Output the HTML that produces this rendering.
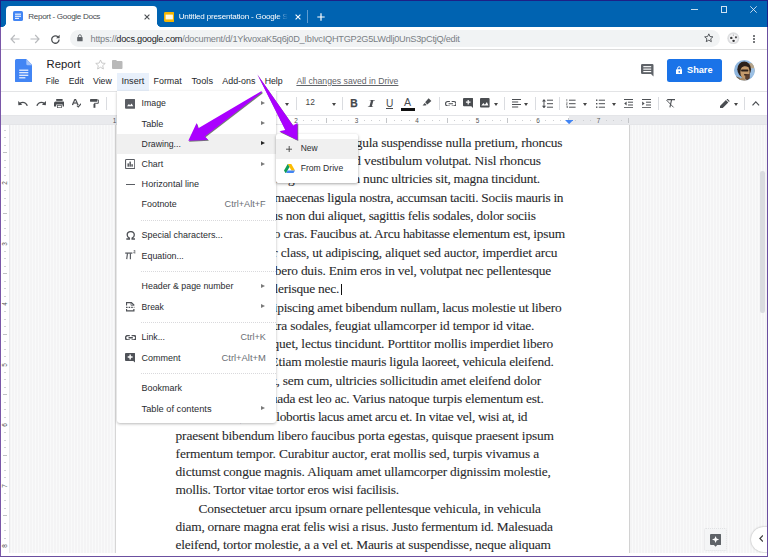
<!DOCTYPE html>
<html><head><meta charset="utf-8"><title>Report - Google Docs</title>
<style>
*{box-sizing:border-box;margin:0;padding:0}
html,body{width:768px;height:557px;overflow:hidden;background:#fff}
body{position:relative;font-family:"Liberation Sans",sans-serif;color:#333;-webkit-font-smoothing:antialiased}
.abs{position:absolute}
#frame{position:absolute;left:0;top:0;width:768px;height:557px;overflow:hidden;background:#fff}
/* chrome title bar */
#titlebar{position:absolute;left:0;top:0;width:768px;height:27px;background:#0063b1}
#tab1{position:absolute;left:6px;top:6px;width:151px;height:21px;background:#fff;border-radius:4px 4px 0 0}
#tab1:before,#tab1:after{content:"";position:absolute;bottom:0;width:4px;height:4px;background:radial-gradient(circle at 0 0,rgba(255,255,255,0) 3.6px,#fff 4.2px)}
#tab1:before{left:-4px}
#tab1:after{right:-4px;background:radial-gradient(circle at 100% 0,rgba(255,255,255,0) 3.6px,#fff 4.2px)}
.tabtxt{position:absolute;top:10px;font-size:9.4px;line-height:13px;white-space:nowrap}
/* address row */
#addr{position:absolute;left:0;top:27px;width:768px;height:23px;background:#fff;border-bottom:1px solid #dcdcdc}
#pill{position:absolute;left:70px;top:3px;width:650px;height:17px;border-radius:9px;background:#f1f3f4}
#url{position:absolute;left:90px;top:5.5px;font-size:10.4px;line-height:12px;color:#70757a;white-space:nowrap}
#url b{font-weight:normal;color:#202124}
/* docs header */
#hdr{position:absolute;left:0;top:50px;width:768px;height:41px;background:#fff}
#title{position:absolute;left:45.5px;top:58px;font-size:13.6px;line-height:16px;color:#202124;white-space:nowrap}
.menu{position:absolute;top:75px;font-size:10.3px;line-height:12px;color:#202124;white-space:nowrap}
#toolbar{position:absolute;left:0;top:91px;width:768px;height:24px;background:#fff;border-top:1px solid #e3e4e6}
.sep{position:absolute;top:97px;width:1px;height:13px;background:#dadce0}
.ico{position:absolute;fill:#444}
.dd{position:absolute;top:102.5px;width:0;height:0;border-left:2.6px solid transparent;border-right:2.6px solid transparent;border-top:3px solid #444}
/* ruler */
#ruler{position:absolute;left:0;top:115px;width:768px;height:10px;background:#e9eaed;border-top:1px solid #e4e5e8;border-bottom:1px solid #e4e5e8}
#rulerw{position:absolute;left:175px;top:0;width:393.5px;height:8px;background:#fff}
.rn{position:absolute;top:-0.5px;font-size:6.4px;line-height:9px;color:#555;width:10px;margin-left:-5px;text-align:center}
/* canvas */
#canvas{position:absolute;left:0;top:125px;width:768px;height:432px;background:repeating-linear-gradient(90deg,#f4f4f5 0,#f4f4f5 1.6px,#fbfcfc 2.3px,#f4f4f5 3px)}
#vruler{position:absolute;left:1px;top:125px;width:9px;height:432px;background:#fff;border-right:1px solid #e6e7ea}
#page{position:absolute;left:114.5px;top:125px;width:515.5px;height:432px;background:#fff;border-left:1px solid #d6d6d6;border-right:1px solid #d2d2d2}
.ln{position:absolute;left:175.8px;font-family:"Liberation Serif",serif;font-size:13px;line-height:16px;color:#222;white-space:nowrap}
/* dropdown menu */
#ddm{position:absolute;left:116.5px;top:91px;width:159.7px;height:332px;background:#fff;box-shadow:0 1px 3px rgba(0,0,0,.28);border-radius:0 0 3px 3px}
.mi{position:absolute;left:25.5px;font-size:9.9px;line-height:12px;color:#202124;white-space:nowrap}
.sc{position:absolute;right:10px;font-size:9.9px;line-height:12px;color:#444;white-space:nowrap}
.ar{position:absolute;left:144.2px;width:0;height:0;border-top:2.4px solid transparent;border-bottom:2.4px solid transparent;border-left:4px solid #777}
.hr{position:absolute;left:24.3px;right:0;height:0;border-top:1px dotted #d9d9dc}
#sub{position:absolute;left:275.5px;top:134px;width:82.5px;height:49px;background:#fff;box-shadow:0 1px 3px rgba(0,0,0,.35);border-radius:2px}
/* borders */
#bl{position:absolute;left:0;top:0;width:1px;height:557px;background:#7a57a8}
#br{position:absolute;left:767px;top:0;width:1px;height:557px;background:#6b4fa0}
#bb{position:absolute;left:0;top:556px;width:768px;height:1px;background:#6b4fa0}
#bt{position:absolute;left:0;top:0;width:768px;height:1px;background:#1c2087}
#bl2{position:absolute;left:0;top:0;width:1px;height:27px;background:#1c2087}
#br2{position:absolute;left:767px;top:0;width:1px;height:27px;background:#1c2087}
</style></head><body>
<div id="frame">
<div id="titlebar">
  <div id="tab1"></div>
  <!-- docs favicon -->
  <svg class="abs" style="left:13px;top:11px" width="10" height="10" viewBox="0 0 10 10"><rect x="0" y="0" width="10" height="10" rx="1.6" fill="#4285f4"/><rect x="2" y="2.6" width="6" height="1.2" fill="#e8f0fe"/><rect x="2" y="4.7" width="6" height="1.2" fill="#e8f0fe"/><rect x="2" y="6.8" width="4" height="1.2" fill="#e8f0fe"/></svg>
  <div class="abs" style="left:28.30px;top:13px;font-size:8.10px;line-height:1em;white-space:pre;letter-spacing:-0.325px;color:#484b50;">Report - Google Docs</div>
  <svg class="abs" style="left:144px;top:13.5px" width="6" height="6" viewBox="0 0 6 6"><path d="M0.6 0.6L5.4 5.4M5.4 0.6L0.6 5.4" stroke="#4a4d51" stroke-width="1.1" fill="none"/></svg>
  <!-- slides favicon -->
  <svg class="abs" style="left:163.5px;top:11.5px" width="10.5" height="10" viewBox="0 0 10.5 10"><rect x="0" y="0" width="10.5" height="10" rx="1.4" fill="#f4b400"/><rect x="1.6" y="2.6" width="7.3" height="4.8" fill="#fff8e1"/></svg>
  <div class="abs" style="left:178.70px;top:13px;font-size:8.10px;line-height:1em;white-space:pre;letter-spacing:-0.190px;color:#fff;-webkit-mask-image:linear-gradient(90deg,#000 90%,transparent 100%);mask-image:linear-gradient(90deg,#000 90%,transparent 100%);">Untitled presentation - Google S</div>
  <svg class="abs" style="left:294.5px;top:13.5px" width="6" height="6" viewBox="0 0 6 6"><path d="M0.6 0.6L5.4 5.4M5.4 0.6L0.6 5.4" stroke="#fff" stroke-width="1.1" fill="none"/></svg>
  <div class="abs" style="left:307px;top:10px;width:1px;height:13px;background:#5f9bd0"></div>
  <svg class="abs" style="left:317px;top:12.5px" width="8" height="8" viewBox="0 0 8 8"><path d="M4 0.3V7.7M0.3 4H7.7" stroke="#fff" stroke-width="1.2" fill="none"/></svg>
  <!-- window controls -->
  <div class="abs" style="left:691px;top:9px;width:7.2px;height:1px;background:#c5dcef"></div>
  <div class="abs" style="left:720.5px;top:6.2px;width:6.8px;height:6.8px;border:1px solid #cfe2f2"></div>
  <svg class="abs" style="left:749.5px;top:6px" width="7" height="7" viewBox="0 0 7 7"><path d="M0.3 0.3L6.7 6.7M6.7 0.3L0.3 6.7" stroke="#e4eff8" stroke-width="0.85" fill="none"/></svg>
</div>

<div id="addr">
  <svg class="abs" style="left:10px;top:7px" width="10" height="10" viewBox="0 0 10 10"><path d="M9.5 5H1.2M4.8 1L1 5L4.8 9" stroke="#b8babd" stroke-width="1.15" fill="none"/></svg>
  <svg class="abs" style="left:30px;top:7px" width="10" height="10" viewBox="0 0 10 10"><path d="M0.5 5H8.8M5.2 1L9 5L5.2 9" stroke="#b8babd" stroke-width="1.15" fill="none"/></svg>
  <svg class="abs" style="left:49.5px;top:6.5px" width="11" height="11" viewBox="0 0 11 11"><path d="M9.1 5.6A3.7 3.7 0 1 1 8 2.9" stroke="#4b4e52" stroke-width="1.25" fill="none"/><path d="M9.6 0.8V4.3H6.1Z" fill="#4b4e52"/></svg>
  <div id="pill"></div>
  <svg class="abs" style="left:77.2px;top:7px" width="5.8" height="7.6" viewBox="0 0 7 9"><rect x="0.2" y="3.6" width="6.6" height="5.2" rx="0.7" fill="#5f6368"/><path d="M1.7 3.8V2.6A1.8 1.8 0 0 1 5.3 2.6V3.8" stroke="#5f6368" stroke-width="1.05" fill="none"/></svg>
  <div class="abs" style="left:90.60px;top:8px;font-size:9.20px;line-height:1em;white-space:pre;letter-spacing:-0.238px;color:#7a7f85;">https://<span style="color:#202124">docs.google.com</span>/document/d/1YkvoxaK5q6j0D_IbIvcIQHTGP2G5LWdlj0UnS3pCtjQ/edit</div>
  <svg class="abs" style="left:703.6px;top:6.2px" width="9.6" height="9.6" viewBox="0 0 10 10"><path d="M5 0.9L6.25 3.7L9.3 4L7 6.05L7.65 9.05L5 7.5L2.35 9.05L3 6.05L0.7 4L3.75 3.7Z" stroke="#4b4e52" stroke-width="0.95" fill="none" stroke-linejoin="round"/></svg>
  <svg class="abs" style="left:727.2px;top:5px" width="12.6" height="12.4" viewBox="0 0 13 13"><circle cx="6.5" cy="6.5" r="6.3" fill="#dddee0"/><circle cx="6.5" cy="6.5" r="4.5" fill="#f4f4f5"/><circle cx="4.4" cy="6.2" r="1.25" fill="#3c3c3e"/><circle cx="9.3" cy="5.6" r="1.15" fill="#4a4a4c"/><circle cx="6.8" cy="9.3" r="1.3" fill="#333335"/><circle cx="6.6" cy="3.2" r="0.7" fill="#9a9a9c"/></svg>
  <div class="abs" style="left:753.1px;top:7.9px;width:1.7px;height:1.7px;background:#4b4e52;border-radius:1px;box-shadow:0 3px 0 #4b4e52,0 6px 0 #4b4e52"></div>
</div>

<div id="hdr"></div>
<!-- docs logo -->
<svg class="abs" style="left:14.5px;top:58.5px" width="17.5" height="23.5" viewBox="0 0 17.5 23.5"><path d="M1.6 0H11.3L17.5 6.2V21.9A1.6 1.6 0 0 1 15.9 23.5H1.6A1.6 1.6 0 0 1 0 21.9V1.6A1.6 1.6 0 0 1 1.6 0Z" fill="#4285f4"/><path d="M11.3 0L17.5 6.2H12.6A1.3 1.3 0 0 1 11.3 4.9Z" fill="#a1c2fa"/><rect x="4.2" y="10.6" width="9.1" height="1.2" fill="#f1f6fe"/><rect x="4.2" y="13.1" width="9.1" height="1.2" fill="#f1f6fe"/><rect x="4.2" y="15.7" width="9.1" height="1.2" fill="#f1f6fe"/><rect x="4.2" y="18.2" width="6.2" height="1.2" fill="#f1f6fe"/></svg>
<div class="abs" style="left:46.50px;top:59px;font-size:11.29px;line-height:1em;white-space:pre;color:#202124;">Report</div>
<svg class="abs" style="left:94.5px;top:59px" width="11" height="11" viewBox="0 0 10 10"><path d="M5 0.9L6.25 3.7L9.3 4L7 6.05L7.65 9.05L5 7.5L2.35 9.05L3 6.05L0.7 4L3.75 3.7Z" stroke="#c4c4c4" stroke-width="0.8" fill="none" stroke-linejoin="round"/></svg>
<svg class="abs" style="left:112px;top:60px" width="10.5" height="9" viewBox="0 0 10.5 9"><path d="M0.9 0H4L5.1 1.1H9.6A0.9 0.9 0 0 1 10.5 2V8.1A0.9 0.9 0 0 1 9.6 9H0.9A0.9 0.9 0 0 1 0 8.1V0.9A0.9 0.9 0 0 1 0.9 0Z" fill="#b9b9b9"/></svg>
<div class="abs" style="left:117px;top:72.5px;width:32px;height:18.5px;background:#e8f0fb"></div>
<div class="abs" style="left:45.75px;top:77px;font-size:8.41px;line-height:1em;white-space:pre;color:#24262a;">File</div>
<div class="abs" style="left:68.75px;top:77px;font-size:8.70px;line-height:1em;white-space:pre;color:#24262a;">Edit</div>
<div class="abs" style="left:93.00px;top:77px;font-size:8.72px;line-height:1em;white-space:pre;color:#24262a;">View</div>
<div class="abs" style="left:121.50px;top:77px;font-size:9.10px;line-height:1em;white-space:pre;color:#24262a;">Insert</div>
<div class="abs" style="left:153.50px;top:77px;font-size:8.92px;line-height:1em;white-space:pre;color:#24262a;">Format</div>
<div class="abs" style="left:191.50px;top:77px;font-size:9.21px;line-height:1em;white-space:pre;color:#24262a;">Tools</div>
<div class="abs" style="left:222.30px;top:77px;font-size:8.89px;line-height:1em;white-space:pre;color:#24262a;">Add-ons</div>
<div class="abs" style="left:264.70px;top:77px;font-size:8.75px;line-height:1em;white-space:pre;color:#24262a;">Help</div>
<div class="abs" style="left:296.40px;top:77px;font-size:8.66px;line-height:1em;white-space:pre;color:#5f6368;text-decoration:underline;text-decoration-thickness:0.6px;text-underline-offset:1px;">All changes saved in Drive</div>
<!-- comment icon -->
<svg class="abs" style="left:641px;top:64px" width="12.5" height="12.5" viewBox="0 0 12.5 12.5"><path d="M1.2 0H11.3A1.2 1.2 0 0 1 12.5 1.2V12.5L10 10H1.2A1.2 1.2 0 0 1 0 8.8V1.2A1.2 1.2 0 0 1 1.2 0Z" fill="#5f6368"/><rect x="2.3" y="2.1" width="7.9" height="1.15" fill="#fff"/><rect x="2.3" y="4.55" width="7.9" height="1.15" fill="#fff"/><rect x="2.3" y="7" width="7.9" height="1.15" fill="#fff"/></svg>
<!-- share -->
<div class="abs" style="left:667px;top:59px;width:55px;height:22.5px;background:#1a73e8;border-radius:2.5px"></div>
<svg class="abs" style="left:675.5px;top:65.5px" width="6.5" height="8.5" viewBox="0 0 6.5 8.5"><rect x="0" y="3.3" width="6.5" height="5.2" rx="0.7" fill="#fff"/><path d="M1.6 3.6V2.4A1.65 1.65 0 0 1 4.9 2.4V3.6" stroke="#fff" stroke-width="1" fill="none"/><circle cx="3.25" cy="5.9" r="0.8" fill="#1a73e8"/></svg>
<div class="abs" style="left:687px;top:64px;font-size:9.2px;line-height:12px;font-weight:bold;color:#fff;white-space:nowrap">Share</div>
<!-- avatar -->
<svg class="abs" style="left:734.4px;top:60px" width="20.8" height="20.8" viewBox="0 0 20 20"><defs><clipPath id="av"><circle cx="10" cy="10" r="10"/></clipPath></defs><g clip-path="url(#av)"><rect width="20" height="20" fill="#8fb6de"/><rect x="14" y="3" width="6" height="9" fill="#b7a58a"/><rect x="15.5" y="8" width="4.5" height="8" fill="#9cc0e4"/><ellipse cx="9.8" cy="9" rx="6.6" ry="7.6" fill="#2b211c"/><ellipse cx="10.6" cy="11.6" rx="4.5" ry="6.6" fill="#c39a6c"/><path d="M6 6.5C7 3.5 13.5 3.2 15 7L13.5 6.6C11.5 5.6 8.5 5.8 6.8 7.6Z" fill="#2b211c"/><rect x="6.8" y="9.2" width="7" height="1.9" rx="0.8" fill="#2c201b"/><path d="M10.8 13.4H15.2V17.5L12.5 19.5L10.8 18Z" fill="#5b3f2e"/><rect x="9.6" y="13.6" width="2.4" height="1.2" fill="#3a2921"/><path d="M0 15L5.5 17L7 20H0Z" fill="#7a6a58"/><path d="M5 18.5L8 16.5L13 20H5Z" fill="#a98a66"/></g></svg>

<div id="toolbar"></div>
<!-- undo -->
<svg class="ico" style="left:17.8px;top:100.8px" width="10.2" height="5.4" viewBox="0 0 11 6"><path d="M0 0L0.2 4.6L4.6 4.2L3 2.9C5.4 1.5 8.3 2.3 9.5 5.6L10.9 5.1C9.4 0.9 5 -0.2 1.8 1.8Z" fill="#4a4d51"/></svg>
<!-- redo -->
<svg class="ico" style="left:36px;top:100.8px" width="10.2" height="5.4" viewBox="0 0 11 6"><path d="M11 0L10.8 4.6L6.4 4.2L8 2.9C5.6 1.5 2.7 2.3 1.5 5.6L0.1 5.1C1.6 0.9 6 -0.2 9.2 1.8Z" fill="#4a4d51"/></svg>
<!-- print -->
<svg class="ico" style="left:53.5px;top:98.5px" width="10.8" height="9.2" viewBox="0 0 10.8 9.2"><rect x="2.2" y="0" width="6.4" height="1.9" fill="#4a4d51"/><path d="M1.6 2.6H9.2A1.6 1.6 0 0 1 10.8 4.2V7.4H8.6V5.4H2.2V7.4H0V4.2A1.6 1.6 0 0 1 1.6 2.6Z" fill="#4a4d51"/><rect x="3" y="6.1" width="4.8" height="3.1" fill="#4a4d51"/><rect x="3.7" y="6.8" width="3.4" height="1.6" fill="#fff"/></svg>
<!-- spellcheck -->
<svg class="ico" style="left:71.5px;top:99.3px" width="9.6" height="8.6" viewBox="0 0 9.6 8.6"><path d="M2.5 0H3.9L6.6 6H5.3L4.7 4.6H1.7L1.1 6H-0.2ZM2 3.6H4.4L3.2 0.9Z" fill="#4a4d51" stroke="#4a4d51" stroke-width="0.2"/><path d="M4.9 6.7L6.3 8L9.2 4.6" stroke="#4a4d51" stroke-width="1.15" fill="none"/></svg>
<!-- paint format -->
<svg class="ico" style="left:89.8px;top:98.8px" width="8.8" height="8.8" viewBox="0 0 8.8 8.8"><rect x="0" y="0" width="7.2" height="2.7" rx="0.4" fill="#4a4d51"/><path d="M7.2 0.9H8.3V4.3H4.4V5.2" stroke="#4a4d51" stroke-width="0.95" fill="none"/><rect x="3.5" y="5" width="1.9" height="3.8" fill="#4a4d51"/></svg>
<div class="sep" style="left:105.5px"></div>
<!-- zoom / style / font dropdowns mostly hidden by menu -->
<div class="dd" style="left:284.8px"></div>
<div class="sep" style="left:295.5px"></div>
<div class="abs" style="left:305.5px;top:97px;font-size:8.4px;line-height:11px;color:#444">12</div>
<div class="dd" style="left:331.8px"></div>
<div class="sep" style="left:342.3px"></div>
<div class="abs" style="left:350.3px;top:99px;font-size:10.3px;line-height:1em;font-weight:bold;color:#44474b;-webkit-text-stroke:0.25px #44474b">B</div>
<div class="abs" style="left:367.6px;top:98px;font-size:10.8px;line-height:1em;font-style:italic;font-weight:bold;color:#4a4d51;font-family:'Liberation Serif',serif;transform:scaleX(1.55);transform-origin:0 0">I</div>
<div class="abs" style="left:385.9px;top:99px;font-size:10.2px;line-height:1em;color:#4a4d51">U</div>
<div class="abs" style="left:385.8px;top:108px;width:7.6px;height:1px;background:#4a4d51"></div>
<div class="abs" style="left:403.9px;top:97px;font-size:10.6px;line-height:1em;color:#4a4d51">A</div>
<div class="abs" style="left:400.5px;top:108px;width:14px;height:2.6px;background:#111"></div>
<!-- highlighter -->
<svg class="ico" style="left:422px;top:98.3px" width="9.6" height="8" viewBox="0 0 9.6 8"><path d="M6.6 0.2L9.4 3L5.3 6.4L3.2 4.3Z" fill="#4a4d51"/><path d="M2.7 4.9L4.7 6.9L3.4 7.6H0.6Z" fill="#4a4d51"/></svg>
<div class="sep" style="left:438.8px"></div>
<!-- link -->
<svg class="ico" style="left:444.5px;top:100.6px" width="11.6" height="5.6" viewBox="0 0 11.6 5.6"><path d="M4.9 0.55H2.8A2.25 2.25 0 0 0 2.8 5.05H4.9M6.7 0.55H8.8A2.25 2.25 0 0 1 8.8 5.05H6.7M3.6 2.8H8" stroke="#4a4d51" stroke-width="1.1" fill="none"/></svg>
<!-- add comment -->
<svg class="ico" style="left:463px;top:98px" width="10.4" height="10.4" viewBox="0 0 10.4 10.4"><path d="M1 0H9.4A1 1 0 0 1 10.4 1V10.4L8.3 8.3H1A1 1 0 0 1 0 7.3V1A1 1 0 0 1 1 0Z" fill="#4a4d51"/><path d="M5.2 1.9V6.5M2.9 4.2H7.5" stroke="#fff" stroke-width="1.2" fill="none"/></svg>
<!-- image -->
<svg class="ico" style="left:480.3px;top:98.4px" width="9.6" height="9.6" viewBox="0 0 9.6 9.6"><rect x="0" y="0" width="9.6" height="9.6" rx="1" fill="#4a4d51"/><path d="M1.3 7.6L3.4 4.9L4.9 6.7L6.9 4.1L8.4 7.6Z" fill="#fff"/></svg>
<div class="dd" style="left:493.6px"></div>
<div class="sep" style="left:504.3px"></div>
<!-- align -->
<svg class="ico" style="left:511.8px;top:99.3px" width="9.4" height="8.6" viewBox="0 0 9.4 8.6"><path d="M0 0.5H9.4M0 3H6.2M0 5.5H9.4M0 8H6.2" stroke="#4a4d51" stroke-width="1" fill="none"/></svg>
<div class="dd" style="left:523.8px"></div>
<div class="sep" style="left:534.5px"></div>
<!-- line spacing -->
<svg class="ico" style="left:541.5px;top:98.8px" width="11.4" height="9.4" viewBox="0 0 11.4 9.4"><path d="M5 1.2H11.4M5 4.7H11.4M5 8.2H11.4" stroke="#4a4d51" stroke-width="1" fill="none"/><path d="M2 1.2V8.2" stroke="#4a4d51" stroke-width="0.95" fill="none"/><path d="M0 2.6L2 0L4 2.6ZM0 6.8L2 9.4L4 6.8Z" fill="#4a4d51"/></svg>
<div class="sep" style="left:559px"></div>
<!-- numbered list -->
<svg class="ico" style="left:566.4px;top:98.8px" width="9.6" height="9.4" viewBox="0 0 9.6 9.4"><path d="M3 1.2H9.6M3 4.7H9.6M3 8.2H9.6" stroke="#4a4d51" stroke-width="1" fill="none"/><path d="M0.8 0V2.4M0.2 3.8H1.4L0.2 5.6H1.4M0.2 7H1.4V9.4H0.2M0.6 8.2H1.4" stroke="#4a4d51" stroke-width="0.6" fill="none"/></svg>
<div class="dd" style="left:582.6px"></div>
<!-- bulleted list -->
<svg class="ico" style="left:596px;top:98.8px" width="9.4" height="9.4" viewBox="0 0 9.4 9.4"><path d="M2.8 1.2H9.4M2.8 4.7H9.4M2.8 8.2H9.4" stroke="#4a4d51" stroke-width="1" fill="none"/><rect x="0" y="0.5" width="1.4" height="1.4" fill="#4a4d51"/><rect x="0" y="4" width="1.4" height="1.4" fill="#4a4d51"/><rect x="0" y="7.5" width="1.4" height="1.4" fill="#4a4d51"/></svg>
<div class="dd" style="left:612px"></div>
<!-- outdent -->
<svg class="ico" style="left:623.8px;top:98.8px" width="9.4" height="9.2" viewBox="0 0 9.4 9.2"><path d="M0 0.5H9.4M4 3.2H9.4M4 6H9.4M0 8.7H9.4" stroke="#4a4d51" stroke-width="1" fill="none"/><path d="M2.6 2.6V6.6L0.2 4.6Z" fill="#4a4d51"/></svg>
<!-- indent -->
<svg class="ico" style="left:641.8px;top:98.8px" width="9.4" height="9.2" viewBox="0 0 9.4 9.2"><path d="M0 0.5H9.4M4 3.2H9.4M4 6H9.4M0 8.7H9.4" stroke="#4a4d51" stroke-width="1" fill="none"/><path d="M0.2 2.6V6.6L2.6 4.6Z" fill="#4a4d51"/></svg>
<div class="sep" style="left:657.8px"></div>
<!-- clear formatting -->
<svg class="ico" style="left:665.5px;top:99px" width="9.2" height="8.8" viewBox="0 0 9.2 8.8"><path d="M1.2 0.6H9.2M5.6 0.6L3.9 8.4" stroke="#4a4d51" stroke-width="1.1" fill="none"/><path d="M0.3 0.9L7.6 8.4" stroke="#4a4d51" stroke-width="0.9" fill="none"/></svg>
<!-- pencil -->
<svg class="ico" style="left:720px;top:98.5px" width="9.8" height="9.4" viewBox="0 0 9.8 9.4"><path d="M0 9.4V7L5.9 1.1L8.3 3.5L2.4 9.4ZM6.6 0.5L7 0.1A0.5 0.5 0 0 1 7.7 0.1L9.4 1.8A0.5 0.5 0 0 1 9.4 2.5L9 2.9Z" fill="#4a4d51"/></svg>
<div class="dd" style="left:733.6px"></div>
<div class="sep" style="left:744.4px"></div>
<!-- chevron up -->
<svg class="ico" style="left:752.2px;top:100.8px" width="7.6" height="4.8" viewBox="0 0 7.6 4.8"><path d="M0.5 4.3L3.8 0.9L7.1 4.3" stroke="#4a4d51" stroke-width="1.2" fill="none"/></svg>

<div id="ruler"><div id="rulerw"></div>
<div class="rn" style="left:114.5px">1</div>
<div class="abs" style="left:121.6px;top:3.5px;width:1px;height:1.5px;background:#cdcfd2"></div>
<div class="abs" style="left:129.1px;top:3.5px;width:1px;height:1.5px;background:#cdcfd2"></div>
<div class="abs" style="left:136.7px;top:3.5px;width:1px;height:1.5px;background:#cdcfd2"></div>
<div class="abs" style="left:144.2px;top:2px;width:1px;height:4.5px;background:#c3c5c8"></div>
<div class="abs" style="left:151.8px;top:3.5px;width:1px;height:1.5px;background:#cdcfd2"></div>
<div class="abs" style="left:159.4px;top:3.5px;width:1px;height:1.5px;background:#cdcfd2"></div>
<div class="abs" style="left:166.9px;top:3.5px;width:1px;height:1.5px;background:#cdcfd2"></div>
<div class="abs" style="left:182.1px;top:3.5px;width:1px;height:1.5px;background:#cdcfd2"></div>
<div class="abs" style="left:189.6px;top:3.5px;width:1px;height:1.5px;background:#cdcfd2"></div>
<div class="abs" style="left:197.2px;top:3.5px;width:1px;height:1.5px;background:#cdcfd2"></div>
<div class="abs" style="left:204.8px;top:2px;width:1px;height:4.5px;background:#c3c5c8"></div>
<div class="abs" style="left:212.3px;top:3.5px;width:1px;height:1.5px;background:#cdcfd2"></div>
<div class="abs" style="left:219.9px;top:3.5px;width:1px;height:1.5px;background:#cdcfd2"></div>
<div class="abs" style="left:227.4px;top:3.5px;width:1px;height:1.5px;background:#cdcfd2"></div>
<div class="rn" style="left:235.5px">1</div>
<div class="abs" style="left:242.6px;top:3.5px;width:1px;height:1.5px;background:#cdcfd2"></div>
<div class="abs" style="left:250.1px;top:3.5px;width:1px;height:1.5px;background:#cdcfd2"></div>
<div class="abs" style="left:257.7px;top:3.5px;width:1px;height:1.5px;background:#cdcfd2"></div>
<div class="abs" style="left:265.2px;top:2px;width:1px;height:4.5px;background:#c3c5c8"></div>
<div class="abs" style="left:272.8px;top:3.5px;width:1px;height:1.5px;background:#cdcfd2"></div>
<div class="abs" style="left:280.4px;top:3.5px;width:1px;height:1.5px;background:#cdcfd2"></div>
<div class="abs" style="left:287.9px;top:3.5px;width:1px;height:1.5px;background:#cdcfd2"></div>
<div class="rn" style="left:296.0px">2</div>
<div class="abs" style="left:303.1px;top:3.5px;width:1px;height:1.5px;background:#cdcfd2"></div>
<div class="abs" style="left:310.6px;top:3.5px;width:1px;height:1.5px;background:#cdcfd2"></div>
<div class="abs" style="left:318.2px;top:3.5px;width:1px;height:1.5px;background:#cdcfd2"></div>
<div class="abs" style="left:325.8px;top:2px;width:1px;height:4.5px;background:#c3c5c8"></div>
<div class="abs" style="left:333.3px;top:3.5px;width:1px;height:1.5px;background:#cdcfd2"></div>
<div class="abs" style="left:340.9px;top:3.5px;width:1px;height:1.5px;background:#cdcfd2"></div>
<div class="abs" style="left:348.4px;top:3.5px;width:1px;height:1.5px;background:#cdcfd2"></div>
<div class="rn" style="left:356.5px">3</div>
<div class="abs" style="left:363.6px;top:3.5px;width:1px;height:1.5px;background:#cdcfd2"></div>
<div class="abs" style="left:371.1px;top:3.5px;width:1px;height:1.5px;background:#cdcfd2"></div>
<div class="abs" style="left:378.7px;top:3.5px;width:1px;height:1.5px;background:#cdcfd2"></div>
<div class="abs" style="left:386.2px;top:2px;width:1px;height:4.5px;background:#c3c5c8"></div>
<div class="abs" style="left:393.8px;top:3.5px;width:1px;height:1.5px;background:#cdcfd2"></div>
<div class="abs" style="left:401.4px;top:3.5px;width:1px;height:1.5px;background:#cdcfd2"></div>
<div class="abs" style="left:408.9px;top:3.5px;width:1px;height:1.5px;background:#cdcfd2"></div>
<div class="rn" style="left:417.0px">4</div>
<div class="abs" style="left:424.1px;top:3.5px;width:1px;height:1.5px;background:#cdcfd2"></div>
<div class="abs" style="left:431.6px;top:3.5px;width:1px;height:1.5px;background:#cdcfd2"></div>
<div class="abs" style="left:439.2px;top:3.5px;width:1px;height:1.5px;background:#cdcfd2"></div>
<div class="abs" style="left:446.8px;top:2px;width:1px;height:4.5px;background:#c3c5c8"></div>
<div class="abs" style="left:454.3px;top:3.5px;width:1px;height:1.5px;background:#cdcfd2"></div>
<div class="abs" style="left:461.9px;top:3.5px;width:1px;height:1.5px;background:#cdcfd2"></div>
<div class="abs" style="left:469.4px;top:3.5px;width:1px;height:1.5px;background:#cdcfd2"></div>
<div class="rn" style="left:477.5px">5</div>
<div class="abs" style="left:484.6px;top:3.5px;width:1px;height:1.5px;background:#cdcfd2"></div>
<div class="abs" style="left:492.1px;top:3.5px;width:1px;height:1.5px;background:#cdcfd2"></div>
<div class="abs" style="left:499.7px;top:3.5px;width:1px;height:1.5px;background:#cdcfd2"></div>
<div class="abs" style="left:507.2px;top:2px;width:1px;height:4.5px;background:#c3c5c8"></div>
<div class="abs" style="left:514.8px;top:3.5px;width:1px;height:1.5px;background:#cdcfd2"></div>
<div class="abs" style="left:522.4px;top:3.5px;width:1px;height:1.5px;background:#cdcfd2"></div>
<div class="abs" style="left:529.9px;top:3.5px;width:1px;height:1.5px;background:#cdcfd2"></div>
<div class="rn" style="left:538.0px">6</div>
<div class="abs" style="left:545.1px;top:3.5px;width:1px;height:1.5px;background:#cdcfd2"></div>
<div class="abs" style="left:552.6px;top:3.5px;width:1px;height:1.5px;background:#cdcfd2"></div>
<div class="abs" style="left:560.2px;top:3.5px;width:1px;height:1.5px;background:#cdcfd2"></div>
<div class="abs" style="left:567.8px;top:2px;width:1px;height:4.5px;background:#c3c5c8"></div>
<div class="abs" style="left:575.3px;top:3.5px;width:1px;height:1.5px;background:#cdcfd2"></div>
<div class="abs" style="left:582.9px;top:3.5px;width:1px;height:1.5px;background:#cdcfd2"></div>
<div class="abs" style="left:590.4px;top:3.5px;width:1px;height:1.5px;background:#cdcfd2"></div>
<div class="rn" style="left:598.5px">7</div>
<div class="abs" style="left:605.6px;top:3.5px;width:1px;height:1.5px;background:#cdcfd2"></div>
<div class="abs" style="left:613.1px;top:3.5px;width:1px;height:1.5px;background:#cdcfd2"></div>
<div class="abs" style="left:620.7px;top:3.5px;width:1px;height:1.5px;background:#cdcfd2"></div>
<div class="abs" style="left:628.2px;top:2px;width:1px;height:4.5px;background:#c3c5c8"></div>
<svg class="abs" style="left:564.5px;top:3.8px" width="8.2" height="4.2" viewBox="0 0 9 4.6"><path d="M0 0H9L4.5 4.6Z" fill="#4285f4"/></svg>
</div>

<div id="canvas"></div>
<div id="vruler"></div>
<div class="abs" style="left:3.8px;top:129.6px;width:2.4px;height:1px;background:#d0d2d5"></div>
<div class="abs" style="left:3.8px;top:137.1px;width:2.4px;height:1px;background:#d0d2d5"></div>
<div class="abs" style="left:3.8px;top:144.7px;width:2.4px;height:1px;background:#d0d2d5"></div>
<div class="abs" style="left:2.8px;top:152.2px;width:4.4px;height:1px;background:#bfc1c4"></div>
<div class="abs" style="left:3.8px;top:159.8px;width:2.4px;height:1px;background:#d0d2d5"></div>
<div class="abs" style="left:3.8px;top:167.4px;width:2.4px;height:1px;background:#d0d2d5"></div>
<div class="abs" style="left:3.8px;top:174.9px;width:2.4px;height:1px;background:#d0d2d5"></div>
<div class="abs" style="left:1px;top:179.0px;width:8px;height:8px;font-size:6.4px;line-height:8px;color:#555;text-align:center;transform:rotate(-90deg)">2</div>
<div class="abs" style="left:3.8px;top:190.1px;width:2.4px;height:1px;background:#d0d2d5"></div>
<div class="abs" style="left:3.8px;top:197.6px;width:2.4px;height:1px;background:#d0d2d5"></div>
<div class="abs" style="left:3.8px;top:205.2px;width:2.4px;height:1px;background:#d0d2d5"></div>
<div class="abs" style="left:2.8px;top:212.8px;width:4.4px;height:1px;background:#bfc1c4"></div>
<div class="abs" style="left:3.8px;top:220.3px;width:2.4px;height:1px;background:#d0d2d5"></div>
<div class="abs" style="left:3.8px;top:227.9px;width:2.4px;height:1px;background:#d0d2d5"></div>
<div class="abs" style="left:3.8px;top:235.4px;width:2.4px;height:1px;background:#d0d2d5"></div>
<div class="abs" style="left:1px;top:239.5px;width:8px;height:8px;font-size:6.4px;line-height:8px;color:#555;text-align:center;transform:rotate(-90deg)">3</div>
<div class="abs" style="left:3.8px;top:250.6px;width:2.4px;height:1px;background:#d0d2d5"></div>
<div class="abs" style="left:3.8px;top:258.1px;width:2.4px;height:1px;background:#d0d2d5"></div>
<div class="abs" style="left:3.8px;top:265.7px;width:2.4px;height:1px;background:#d0d2d5"></div>
<div class="abs" style="left:2.8px;top:273.2px;width:4.4px;height:1px;background:#bfc1c4"></div>
<div class="abs" style="left:3.8px;top:280.8px;width:2.4px;height:1px;background:#d0d2d5"></div>
<div class="abs" style="left:3.8px;top:288.4px;width:2.4px;height:1px;background:#d0d2d5"></div>
<div class="abs" style="left:3.8px;top:295.9px;width:2.4px;height:1px;background:#d0d2d5"></div>
<div class="abs" style="left:1px;top:300.0px;width:8px;height:8px;font-size:6.4px;line-height:8px;color:#555;text-align:center;transform:rotate(-90deg)">4</div>
<div class="abs" style="left:3.8px;top:311.1px;width:2.4px;height:1px;background:#d0d2d5"></div>
<div class="abs" style="left:3.8px;top:318.6px;width:2.4px;height:1px;background:#d0d2d5"></div>
<div class="abs" style="left:3.8px;top:326.2px;width:2.4px;height:1px;background:#d0d2d5"></div>
<div class="abs" style="left:2.8px;top:333.8px;width:4.4px;height:1px;background:#bfc1c4"></div>
<div class="abs" style="left:3.8px;top:341.3px;width:2.4px;height:1px;background:#d0d2d5"></div>
<div class="abs" style="left:3.8px;top:348.9px;width:2.4px;height:1px;background:#d0d2d5"></div>
<div class="abs" style="left:3.8px;top:356.4px;width:2.4px;height:1px;background:#d0d2d5"></div>
<div class="abs" style="left:1px;top:360.5px;width:8px;height:8px;font-size:6.4px;line-height:8px;color:#555;text-align:center;transform:rotate(-90deg)">5</div>
<div class="abs" style="left:3.8px;top:371.6px;width:2.4px;height:1px;background:#d0d2d5"></div>
<div class="abs" style="left:3.8px;top:379.1px;width:2.4px;height:1px;background:#d0d2d5"></div>
<div class="abs" style="left:3.8px;top:386.7px;width:2.4px;height:1px;background:#d0d2d5"></div>
<div class="abs" style="left:2.8px;top:394.2px;width:4.4px;height:1px;background:#bfc1c4"></div>
<div class="abs" style="left:3.8px;top:401.8px;width:2.4px;height:1px;background:#d0d2d5"></div>
<div class="abs" style="left:3.8px;top:409.4px;width:2.4px;height:1px;background:#d0d2d5"></div>
<div class="abs" style="left:3.8px;top:416.9px;width:2.4px;height:1px;background:#d0d2d5"></div>
<div class="abs" style="left:1px;top:421.0px;width:8px;height:8px;font-size:6.4px;line-height:8px;color:#555;text-align:center;transform:rotate(-90deg)">6</div>
<div class="abs" style="left:3.8px;top:432.1px;width:2.4px;height:1px;background:#d0d2d5"></div>
<div class="abs" style="left:3.8px;top:439.6px;width:2.4px;height:1px;background:#d0d2d5"></div>
<div class="abs" style="left:3.8px;top:447.2px;width:2.4px;height:1px;background:#d0d2d5"></div>
<div class="abs" style="left:2.8px;top:454.8px;width:4.4px;height:1px;background:#bfc1c4"></div>
<div class="abs" style="left:3.8px;top:462.3px;width:2.4px;height:1px;background:#d0d2d5"></div>
<div class="abs" style="left:3.8px;top:469.9px;width:2.4px;height:1px;background:#d0d2d5"></div>
<div class="abs" style="left:3.8px;top:477.4px;width:2.4px;height:1px;background:#d0d2d5"></div>
<div class="abs" style="left:1px;top:481.5px;width:8px;height:8px;font-size:6.4px;line-height:8px;color:#555;text-align:center;transform:rotate(-90deg)">7</div>
<div class="abs" style="left:3.8px;top:492.6px;width:2.4px;height:1px;background:#d0d2d5"></div>
<div class="abs" style="left:3.8px;top:500.1px;width:2.4px;height:1px;background:#d0d2d5"></div>
<div class="abs" style="left:3.8px;top:507.7px;width:2.4px;height:1px;background:#d0d2d5"></div>
<div class="abs" style="left:2.8px;top:515.2px;width:4.4px;height:1px;background:#bfc1c4"></div>
<div class="abs" style="left:3.8px;top:522.8px;width:2.4px;height:1px;background:#d0d2d5"></div>
<div class="abs" style="left:3.8px;top:530.4px;width:2.4px;height:1px;background:#d0d2d5"></div>
<div class="abs" style="left:3.8px;top:537.9px;width:2.4px;height:1px;background:#d0d2d5"></div>
<div class="abs" style="left:1px;top:542.0px;width:8px;height:8px;font-size:6.4px;line-height:8px;color:#555;text-align:center;transform:rotate(-90deg)">8</div>
<div id="page"></div>
<div class="abs" style="left:198.50px;top:136px;font-size:13.40px;line-height:1em;white-space:pre;letter-spacing:-0.189px;font-family:'Liberation Serif',serif;color:#29292c;-webkit-text-stroke:0.08px #29292c;">Lorem ipsum dolor sit amet, ligula suspendisse nulla pretium, rhoncus</div>
<div class="abs" style="left:175.60px;top:154px;font-size:13.40px;line-height:1em;white-space:pre;letter-spacing:-0.143px;font-family:'Liberation Serif',serif;color:#29292c;-webkit-text-stroke:0.08px #29292c;">tempor fermentum, enim integer ad vestibulum volutpat. Nisl rhoncus</div>
<div class="abs" style="left:175.60px;top:172px;font-size:13.40px;line-height:1em;white-space:pre;letter-spacing:-0.236px;font-family:'Liberation Serif',serif;color:#29292c;-webkit-text-stroke:0.08px #29292c;">turpis est, vel elit, congue wisi enim nunc ultricies sit, magna tincidunt.</div>
<div class="abs" style="left:175.60px;top:191px;font-size:13.40px;line-height:1em;white-space:pre;letter-spacing:-0.273px;font-family:'Liberation Serif',serif;color:#29292c;-webkit-text-stroke:0.08px #29292c;">Maecenas aliquam maecenas ligula nostra, accumsan taciti. Sociis mauris in</div>
<div class="abs" style="left:175.60px;top:209px;font-size:13.40px;line-height:1em;white-space:pre;letter-spacing:-0.246px;font-family:'Liberation Serif',serif;color:#29292c;-webkit-text-stroke:0.08px #29292c;">integer, a dolor netus non dui aliquet, sagittis felis sodales, dolor sociis</div>
<div class="abs" style="left:175.60px;top:227px;font-size:13.40px;line-height:1em;white-space:pre;letter-spacing:-0.256px;font-family:'Liberation Serif',serif;color:#29292c;-webkit-text-stroke:0.08px #29292c;">mauris, vel eu libero cras. Faucibus at. Arcu habitasse elementum est, ipsum</div>
<div class="abs" style="left:175.60px;top:246px;font-size:13.40px;line-height:1em;white-space:pre;letter-spacing:-0.178px;font-family:'Liberation Serif',serif;color:#29292c;-webkit-text-stroke:0.08px #29292c;">purus pede porttitor class, ut adipiscing, aliquet sed auctor, imperdiet arcu</div>
<div class="abs" style="left:175.60px;top:264px;font-size:13.40px;line-height:1em;white-space:pre;letter-spacing:-0.203px;font-family:'Liberation Serif',serif;color:#29292c;-webkit-text-stroke:0.08px #29292c;">per diam dapibus libero duis. Enim eros in vel, volutpat nec pellentesque</div>
<div class="abs" style="left:175.60px;top:282px;font-size:13.40px;line-height:1em;white-space:pre;letter-spacing:-0.249px;font-family:'Liberation Serif',serif;color:#29292c;-webkit-text-stroke:0.08px #29292c;">leo, temporibus scelerisque nec.</div>
<div class="abs" style="left:198.50px;top:301px;font-size:13.40px;line-height:1em;white-space:pre;letter-spacing:-0.233px;font-family:'Liberation Serif',serif;color:#29292c;-webkit-text-stroke:0.08px #29292c;">Ac dolor ac adipiscing amet bibendum nullam, lacus molestie ut libero</div>
<div class="abs" style="left:175.60px;top:319px;font-size:13.40px;line-height:1em;white-space:pre;letter-spacing:-0.186px;font-family:'Liberation Serif',serif;color:#29292c;-webkit-text-stroke:0.08px #29292c;">nec, diam et, pharetra sodales, feugiat ullamcorper id tempor id vitae.</div>
<div class="abs" style="left:175.60px;top:337px;font-size:13.40px;line-height:1em;white-space:pre;letter-spacing:-0.153px;font-family:'Liberation Serif',serif;color:#29292c;-webkit-text-stroke:0.08px #29292c;">Mauris pretium aliquet, lectus tincidunt. Porttitor mollis imperdiet libero</div>
<div class="abs" style="left:175.60px;top:355px;font-size:13.40px;line-height:1em;white-space:pre;letter-spacing:-0.231px;font-family:'Liberation Serif',serif;color:#29292c;-webkit-text-stroke:0.08px #29292c;">senectus pulvinar. Etiam molestie mauris ligula laoreet, vehicula eleifend.</div>
<div class="abs" style="left:175.60px;top:374px;font-size:13.40px;line-height:1em;white-space:pre;letter-spacing:-0.208px;font-family:'Liberation Serif',serif;color:#29292c;-webkit-text-stroke:0.08px #29292c;">Repellat orci erat et, sem cum, ultricies sollicitudin amet eleifend dolor</div>
<div class="abs" style="left:175.60px;top:392px;font-size:13.40px;line-height:1em;white-space:pre;letter-spacing:-0.193px;font-family:'Liberation Serif',serif;color:#29292c;-webkit-text-stroke:0.08px #29292c;">nullam erat, malesuada est leo ac. Varius natoque turpis elementum est.</div>
<div class="abs" style="left:175.60px;top:410px;font-size:13.40px;line-height:1em;white-space:pre;letter-spacing:-0.288px;font-family:'Liberation Serif',serif;color:#29292c;-webkit-text-stroke:0.08px #29292c;">Duis montes, tellus lobortis lacus amet arcu et. In vitae vel, wisi at, id</div>
<div class="abs" style="left:175.60px;top:429px;font-size:13.40px;line-height:1em;white-space:pre;letter-spacing:-0.168px;font-family:'Liberation Serif',serif;color:#29292c;-webkit-text-stroke:0.08px #29292c;">praesent bibendum libero faucibus porta egestas, quisque praesent ipsum</div>
<div class="abs" style="left:175.60px;top:447px;font-size:13.40px;line-height:1em;white-space:pre;letter-spacing:-0.148px;font-family:'Liberation Serif',serif;color:#29292c;-webkit-text-stroke:0.08px #29292c;">fermentum tempor. Curabitur auctor, erat mollis sed, turpis vivamus a</div>
<div class="abs" style="left:175.60px;top:465px;font-size:13.40px;line-height:1em;white-space:pre;letter-spacing:-0.189px;font-family:'Liberation Serif',serif;color:#29292c;-webkit-text-stroke:0.08px #29292c;">dictumst congue magnis. Aliquam amet ullamcorper dignissim molestie,</div>
<div class="abs" style="left:175.60px;top:483px;font-size:13.40px;line-height:1em;white-space:pre;letter-spacing:-0.254px;font-family:'Liberation Serif',serif;color:#29292c;-webkit-text-stroke:0.08px #29292c;">mollis. Tortor vitae tortor eros wisi facilisis.</div>
<div class="abs" style="left:198.50px;top:502px;font-size:13.40px;line-height:1em;white-space:pre;letter-spacing:-0.192px;font-family:'Liberation Serif',serif;color:#29292c;-webkit-text-stroke:0.08px #29292c;">Consectetuer arcu ipsum ornare pellentesque vehicula, in vehicula</div>
<div class="abs" style="left:175.60px;top:520px;font-size:13.40px;line-height:1em;white-space:pre;letter-spacing:-0.245px;font-family:'Liberation Serif',serif;color:#29292c;-webkit-text-stroke:0.08px #29292c;">diam, ornare magna erat felis wisi a risus. Justo fermentum id. Malesuada</div>
<div class="abs" style="left:175.60px;top:538px;font-size:13.40px;line-height:1em;white-space:pre;letter-spacing:-0.231px;font-family:'Liberation Serif',serif;color:#29292c;-webkit-text-stroke:0.08px #29292c;">eleifend, tortor molestie, a a vel et. Mauris at suspendisse, neque aliquam</div>
<div class="abs" style="left:340.5px;top:283.5px;width:1px;height:11.6px;background:#111"></div>
<!-- scrollbar thumb -->
<div class="abs" style="left:760.3px;top:171px;width:4.4px;height:141.5px;border-radius:2.2px;background:#dadce0"></div>
<!-- explore button -->
<div class="abs" style="left:704px;top:528px;width:23.4px;height:23.4px;border-radius:2px;background:#f4f5f6;border:1px dotted #e1e2e4"></div>
<svg class="abs" style="left:710px;top:533.8px" width="11.2" height="12.8" viewBox="0 0 11.2 12.8"><path d="M1 0H10.2A1 1 0 0 1 11.2 1V10A1 1 0 0 1 10.2 11H7.2L5.6 12.8L4 11H1A1 1 0 0 1 0 10V1A1 1 0 0 1 1 0Z" fill="#5f6368"/><path d="M5.6 1.9L6.6 4.5L9.2 5.5L6.6 6.5L5.6 9.1L4.6 6.5L2 5.5L4.6 4.5Z" fill="#fff"/></svg>
<!-- side panel toggle -->
<div class="abs" style="left:751.3px;top:526.6px;width:30px;height:25px;border-radius:12.5px;background:#fff;box-shadow:0 0 2px rgba(0,0,0,.35)"></div>
<svg class="abs" style="left:758.8px;top:535.4px" width="4.4" height="7" viewBox="0 0 4.4 7"><path d="M3.9 0.5L0.9 3.5L3.9 6.5" stroke="#444" stroke-width="1.2" fill="none"/></svg>
<div class="abs" style="left:1px;top:553.4px;width:766px;height:2.6px;background:#fff"></div>

<div id="ddm">
  <div class="abs" style="left:0;top:43.2px;width:159.7px;height:19.8px;background:#f0f0f0"></div>
  <div class="abs" style="left:25.10px;top:8px;font-size:8.78px;line-height:1em;white-space:pre;color:#2a2c30;">Image</div>
<div class="ar" style="top:10.0px;border-left-color:#7a7a7a"></div>
<div class="abs" style="left:25.10px;top:29px;font-size:9.12px;line-height:1em;white-space:pre;color:#2a2c30;">Table</div>
<div class="ar" style="top:30.1px;border-left-color:#7a7a7a"></div>
<div class="abs" style="left:25.10px;top:49px;font-size:8.73px;line-height:1em;white-space:pre;color:#2a2c30;">Drawing...</div>
<div class="ar" style="top:50.3px;border-left-color:#222"></div>
<div class="abs" style="left:25.10px;top:69px;font-size:8.79px;line-height:1em;white-space:pre;color:#2a2c30;">Chart</div>
<div class="ar" style="top:70.5px;border-left-color:#7a7a7a"></div>
<div class="abs" style="left:25.10px;top:89px;font-size:9.09px;line-height:1em;white-space:pre;color:#2a2c30;">Horizontal line</div>
<div class="abs" style="left:25.10px;top:109px;font-size:8.92px;line-height:1em;white-space:pre;color:#2a2c30;">Footnote</div>
<div class="abs" style="left:108.10px;top:109px;font-size:9.15px;line-height:1em;white-space:pre;color:#6a6e74;">Ctrl+Alt+F</div>
<div class="hr" style="top:128.7px"></div>
<div class="abs" style="left:25.10px;top:140px;font-size:8.98px;line-height:1em;white-space:pre;color:#2a2c30;">Special characters...</div>
<div class="abs" style="left:25.10px;top:161px;font-size:8.83px;line-height:1em;white-space:pre;color:#2a2c30;">Equation...</div>
<div class="hr" style="top:179.7px"></div>
<div class="abs" style="left:25.10px;top:191px;font-size:8.84px;line-height:1em;white-space:pre;color:#2a2c30;">Header &amp; page number</div>
<div class="ar" style="top:192.6px;border-left-color:#7a7a7a"></div>
<div class="abs" style="left:25.10px;top:212px;font-size:8.54px;line-height:1em;white-space:pre;color:#2a2c30;">Break</div>
<div class="ar" style="top:213.0px;border-left-color:#7a7a7a"></div>
<div class="hr" style="top:230.6px"></div>
<div class="abs" style="left:25.10px;top:242px;font-size:8.77px;line-height:1em;white-space:pre;color:#2a2c30;">Link...</div>
<div class="abs" style="left:124.00px;top:242px;font-size:9.02px;line-height:1em;white-space:pre;color:#6a6e74;">Ctrl+K</div>
<div class="abs" style="left:25.10px;top:263px;font-size:9.00px;line-height:1em;white-space:pre;color:#2a2c30;">Comment</div>
<div class="abs" style="left:105.00px;top:263px;font-size:9.38px;line-height:1em;white-space:pre;color:#6a6e74;">Ctrl+Alt+M</div>
<div class="hr" style="top:282.0px"></div>
<div class="abs" style="left:25.10px;top:293px;font-size:8.97px;line-height:1em;white-space:pre;color:#2a2c30;">Bookmark</div>
<div class="abs" style="left:25.10px;top:314px;font-size:9.25px;line-height:1em;white-space:pre;color:#2a2c30;">Table of contents</div>
<div class="ar" style="top:315.0px;border-left-color:#7a7a7a"></div>
<!-- image icon -->
<svg class="abs" style="left:8.6px;top:8px" width="10.3" height="9.7" viewBox="0 0 10.3 9.7"><rect width="10.3" height="9.7" rx="0.9" fill="#5a5d63"/><path d="M2 7.2L3.9 5L5.1 6.3L6.6 4.5L8.3 7.2Z" fill="#fff"/></svg>
<!-- chart icon -->
<svg class="abs" style="left:8.6px;top:68px" width="10.3" height="10.2" viewBox="0 0 10.3 10.2"><rect x="0.55" y="0.55" width="9.2" height="9.1" rx="0.8" fill="none" stroke="#5a5d63" stroke-width="1.1"/><rect x="2.5" y="4.4" width="1.4" height="3.3" fill="#4a4d52"/><rect x="4.45" y="2.6" width="1.4" height="5.1" fill="#4a4d52"/><rect x="6.4" y="5.2" width="1.4" height="2.5" fill="#4a4d52"/></svg>
<!-- horizontal line -->
<div class="abs" style="left:9.4px;top:92.8px;width:8.9px;height:1.1px;background:#5a5d63"></div>
<!-- omega -->
<svg class="abs" style="left:9.2px;top:140.4px" width="9.5" height="8.6" viewBox="0 0 9.5 8.6"><path d="M0.3 8H3.4V7.1C1.9 6.3 1.2 5.2 1.2 3.9C1.2 2 2.7 0.6 4.75 0.6C6.8 0.6 8.3 2 8.3 3.9C8.3 5.2 7.6 6.3 6.1 7.1V8H9.2" stroke="#4f5257" stroke-width="1.3" fill="none"/></svg>
<!-- pi squared -->
<svg class="abs" style="left:8.6px;top:159.2px" width="11" height="9.4" viewBox="0 0 11 9.4"><path d="M0.2 3.1H7.4" stroke="#5a5d63" stroke-width="1.3" fill="none"/><path d="M2.5 3.2L1.7 9.2M5.4 3.2V9.2" stroke="#5a5d63" stroke-width="1.2" fill="none"/><path d="M8.6 0.8C8.9 0.2 10.2 0.2 10.2 1C10.2 1.6 8.8 2.2 8.7 2.9H10.5" stroke="#4f5257" stroke-width="0.8" fill="none"/></svg>
<!-- break icon -->
<svg class="abs" style="left:9.7px;top:211.4px" width="8.4" height="9.3" viewBox="0 0 8.4 9.3"><path d="M0.5 3.6V0.5H5.3L7.9 3.1V3.6M0.5 7V8.8H7.9V7" stroke="#4f5257" stroke-width="1.25" fill="none"/><path d="M5 0.5V3.3H7.9" stroke="#5a5d63" stroke-width="0.8" fill="none"/><path d="M0 5.3H8.4" stroke="#4f5257" stroke-width="1.2" stroke-dasharray="1.6 1" fill="none"/></svg>
<!-- link -->
<svg class="abs" style="left:8.1px;top:243.9px" width="11.4" height="5.5" viewBox="0 0 11.6 5.6"><path d="M4.9 0.55H2.8A2.25 2.25 0 0 0 2.8 5.05H4.9M6.7 0.55H8.8A2.25 2.25 0 0 1 8.8 5.05H6.7M3.6 2.8H8" stroke="#4f5257" stroke-width="1.45" fill="none"/></svg>
<!-- comment -->
<svg class="abs" style="left:8.6px;top:262px" width="10.3" height="9.8" viewBox="0 0 10.3 9.8"><path d="M0.9 0H9.4A0.9 0.9 0 0 1 10.3 0.9V9.8L8.3 7.9H0.9A0.9 0.9 0 0 1 0 7V0.9A0.9 0.9 0 0 1 0.9 0Z" fill="#4f5258"/><path d="M5.15 1.5V6.4M2.7 3.95H7.6" stroke="#fff" stroke-width="1.4" fill="none"/></svg>

</div>
<div id="sub">
  <div class="abs" style="left:0;top:4.5px;width:82.5px;height:20.2px;background:#f0f0f0"></div>
  <div class="abs" style="left:25.20px;top:10px;font-size:8.45px;line-height:1em;white-space:pre;color:#2a2c30;">New</div>
<div class="abs" style="left:25.20px;top:30px;font-size:8.60px;line-height:1em;white-space:pre;color:#2a2c30;">From Drive</div>
<svg class="abs" style="left:10.6px;top:11.7px" width="6.4" height="6.4" viewBox="0 0 6.4 6.4"><path d="M3.2 0V6.4M0 3.2H6.4" stroke="#444" stroke-width="0.9" fill="none"/></svg>
<svg class="abs" style="left:8.1px;top:29.6px" width="11" height="9.9" viewBox="0 0 11 9.9"><path d="M3.7 0H7.3L11 6.4H7.4Z" fill="#fbbc04"/><path d="M3.7 0L5.5 3.1L1.8 9.5L0 6.4Z" fill="#0f9d58"/><path d="M3.6 6.4H11L9.2 9.6H1.8Z" fill="#4285f4"/></svg>

</div>

<svg class="abs" style="left:0;top:0" width="768" height="557" viewBox="0 0 768 557">
<g transform="translate(0.75,0.85)" fill="#3a4a3a" opacity="0.7"><path d="M261.6 91L198.3 128.2L196.6 123.1L188.3 140.8L208.2 140L204.8 136.5L261.8 92.6Z"/><path d="M257.2 74.3L293.1 125.6L297.5 123.1L297.5 140.2L279.4 131.3L285.2 129.9Z"/></g>
<path d="M261.6 91L198.3 128.2L196.6 123.1L188.3 140.8L208.2 140L204.8 136.5L261.8 92.6Z" fill="#aa00ff"/>
<path d="M257.2 74.3L293.1 125.6L297.5 123.1L297.5 140.2L279.4 131.3L285.2 129.9Z" fill="#aa00ff"/>
</svg>

<div id="bl"></div><div id="br"></div><div id="bb"></div><div id="bt"></div><div id="bl2"></div><div id="br2"></div>

</div>
</body></html>
